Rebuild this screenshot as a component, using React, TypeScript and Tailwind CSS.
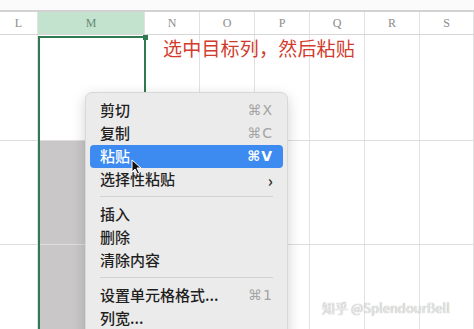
import React from 'react';

const cols = [
  { key: 'L', w: 'w-[38px]' },
  { key: 'M', w: 'w-[107px]' },
  { key: 'N', w: 'w-[55px]' },
  { key: 'O', w: 'w-[55px]' },
  { key: 'P', w: 'w-[55px]' },
  { key: 'Q', w: 'w-[55px]' },
  { key: 'R', w: 'w-[55px]' },
  { key: 'S', w: 'w-[54px]' },
];

const rows = ['h-[106px]', 'h-[104px]', 'h-[90px]'];

type Item = { label: string; shortcut?: string; active?: boolean; sub?: boolean } | 'sep';

const items: Item[] = [
  { label: '剪切', shortcut: '⌘X' },
  { label: '复制', shortcut: '⌘C' },
  { label: '粘贴', shortcut: '⌘V', active: true },
  { label: '选择性粘贴', sub: true },
  'sep',
  { label: '插入' },
  { label: '删除' },
  { label: '清除内容' },
  'sep',
  { label: '设置单元格格式...', shortcut: '⌘1' },
  { label: '列宽...' },
];

const App: React.FC = () => {
  return (
    <div className="relative w-[474px] h-[329px] overflow-hidden bg-white font-['Noto_Sans_CJK_SC',sans-serif]">
      {/* top band */}
      <div className="h-[12px] bg-[#fbfbfb] border-b-2 border-[#d2d2d2]" />

      {/* column header */}
      <div className="flex h-[23px] border-b border-[#d6d6d6]">
        {cols.map((c) => (
          <div
            key={c.key}
            className={`${c.w} flex items-center justify-center border-r border-[#e2e2e2] text-[12px] font-['Liberation_Serif',serif] ${
              c.key === 'M' ? 'bg-[#c3e3cf] text-[#6a8a76]' : 'text-[#8c8c8c]'
            }`}
          >
            {c.key}
          </div>
        ))}
      </div>

      {/* cells */}
      {rows.map((h, ri) => (
        <div key={ri} className={`flex ${h} border-b border-[#dedede]`}>
          {cols.map((c) => (
            <div
              key={c.key}
              className={`${c.w} border-r border-[#e2e2e2] ${c.key === 'M' && ri > 0 ? 'bg-[#c9c7c8]' : ''}`}
            />
          ))}
        </div>
      ))}

      {/* column selection */}
      <div className="absolute left-[38px] top-[36px] w-[108px] h-[300px] border-2 border-[#2f7a50]" />
      <div className="absolute left-[143px] top-[35px] w-[5px] h-[5px] bg-[#2f7a50]" />

      {/* annotation */}
      <div className="absolute left-[163px] top-[36px] text-[19px] leading-[24px] text-[#d23b2c] tracking-[0.2px]">
        选中目标列，然后粘贴
      </div>

      {/* context menu */}
      <div className="absolute left-[85px] top-[92px] w-[203px] h-[260px] rounded-[7px] bg-[#ecebeb] border border-[#d9d8d8] shadow-[0_4px_14px_rgba(0,0,0,0.18)] px-[4px] pt-[6px]">
        {items.map((it, i) =>
          it === 'sep' ? (
            <div key={i} className="mx-[10px] mt-[5px] mb-[6px] h-px bg-[#d3d2d2]" />
          ) : (
            <div
              key={i}
              className={`flex items-center justify-between h-[23px] pl-[10px] pr-[10px] rounded-[4px] text-[15px] font-medium ${
                it.active ? 'bg-[#3d8bf0] text-white' : 'text-[#1f1f1f]'
              }`}
            >
              <span>{it.label}</span>
              {it.shortcut && (
                <span
                  className={`text-[14px] font-['DejaVu_Sans',sans-serif] tracking-[1px] ${
                    it.active ? 'text-white font-bold' : 'text-[#a3a3a3] font-normal'
                  }`}
                >
                  {it.shortcut}
                </span>
              )}
              {it.sub && <span className="text-[16px] font-bold text-[#333]">›</span>}
            </div>
          )
        )}
      </div>

      {/* mouse pointer */}
      <svg className="absolute left-[131px] top-[159px]" width="11" height="16" viewBox="0 0 11 16">
        <path d="M1 1 L1 13 L4 10 L6.5 15 L8.5 14 L6 9 L10 9 Z" fill="#111" stroke="#fff" strokeWidth="1" />
      </svg>

      {/* watermark */}
      <div className="absolute left-[322px] top-[298px] text-[13px] text-[#ebebeb] [text-shadow:0_0_1px_#8a8a8a]">
        知乎 @SplendourBell
      </div>
    </div>
  );
};

export default App;
